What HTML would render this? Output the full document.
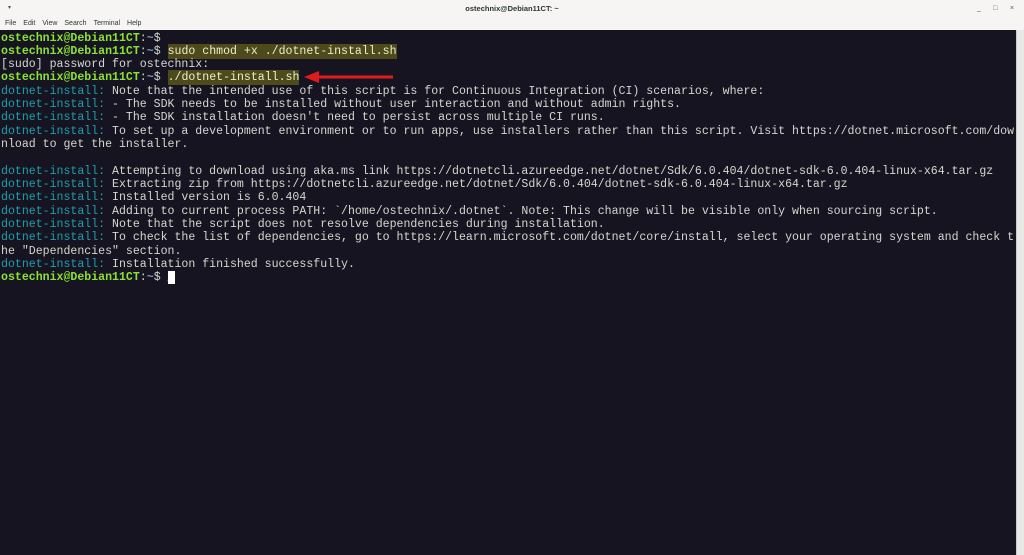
<!DOCTYPE html>
<html><head><meta charset="utf-8"><style>
body{margin:0;width:1024px;height:555px;overflow:hidden;background:#f6f5f4;font-family:"Liberation Sans",sans-serif;position:relative}
.title{position:absolute;top:0;left:0;width:1024px;height:18px;background:#f6f5f4;text-align:center;font-size:7.5px;line-height:18px;color:#2e3436;font-weight:bold}
.menu{position:absolute;top:18px;left:0;width:1024px;height:12px;font-size:7px;line-height:12px;color:#2e3436}
.menu span{margin-left:5px;margin-right:2px}
.wc{position:absolute;top:5px;font-size:7px;color:#555}
.term{position:absolute;top:30px;left:0;width:1016px;height:525px;background:#171421;}
.sb{position:absolute;top:30px;left:1016px;width:8px;height:525px;background:#e8e8e7;border-left:1px solid #ccc}
pre{margin:0;padding:1.5px 0 0 1px;font-family:"Liberation Mono",monospace;font-size:11.57px;line-height:13.33px;color:#d3d7cf;white-space:pre}
.g{color:#8ae234;font-weight:bold}.b{color:#729fcf;font-weight:bold}.c{color:#1a9fae}
.h{background:#4d4a1c;color:#eeeec8;padding:1px 0}
.cur{background:#fff;color:#fff}
</style></head><body>
<div class="title">ostechnix@Debian11CT: ~</div>
<div style="position:absolute;left:8px;top:4px;font-size:6px;color:#555">&#9662;</div>
<div class="wc" style="left:977px">_</div><div class="wc" style="left:993px">&#9633;</div><div class="wc" style="left:1010px">&#215;</div>
<div class="menu"><span>File</span><span>Edit</span><span>View</span><span>Search</span><span>Terminal</span><span>Help</span></div>
<div class="term"><pre><span class="g">ostechnix@Debian11CT</span>:<span class="b">~</span>$
<span class="g">ostechnix@Debian11CT</span>:<span class="b">~</span>$ <span class="h">sudo chmod +x ./dotnet-install.sh</span>
[sudo] password for ostechnix:
<span class="g">ostechnix@Debian11CT</span>:<span class="b">~</span>$ <span class="h">./dotnet-install.sh</span>
<span class="c">dotnet-install:</span> Note that the intended use of this script is for Continuous Integration (CI) scenarios, where:
<span class="c">dotnet-install:</span> - The SDK needs to be installed without user interaction and without admin rights.
<span class="c">dotnet-install:</span> - The SDK installation doesn't need to persist across multiple CI runs.
<span class="c">dotnet-install:</span> To set up a development environment or to run apps, use installers rather than this script. Visit https://dotnet.microsoft.com/dow
nload to get the installer.

<span class="c">dotnet-install:</span> Attempting to download using aka.ms link https://dotnetcli.azureedge.net/dotnet/Sdk/6.0.404/dotnet-sdk-6.0.404-linux-x64.tar.gz
<span class="c">dotnet-install:</span> Extracting zip from https://dotnetcli.azureedge.net/dotnet/Sdk/6.0.404/dotnet-sdk-6.0.404-linux-x64.tar.gz
<span class="c">dotnet-install:</span> Installed version is 6.0.404
<span class="c">dotnet-install:</span> Adding to current process PATH: `/home/ostechnix/.dotnet`. Note: This change will be visible only when sourcing script.
<span class="c">dotnet-install:</span> Note that the script does not resolve dependencies during installation.
<span class="c">dotnet-install:</span> To check the list of dependencies, go to https://learn.microsoft.com/dotnet/core/install, select your operating system and check t
he "Dependencies" section.
<span class="c">dotnet-install:</span> Installation finished successfully.
<span class="g">ostechnix@Debian11CT</span>:<span class="b">~</span>$ <span class="cur">_</span></pre></div>
<svg style="position:absolute;left:302px;top:70px" width="95" height="14"><polygon points="2,7 17,1 17,13" fill="#e01b1b"/><rect x="15" y="5.5" width="76" height="3" fill="#e01b1b"/></svg>
<div class="sb"></div>
</body></html>
